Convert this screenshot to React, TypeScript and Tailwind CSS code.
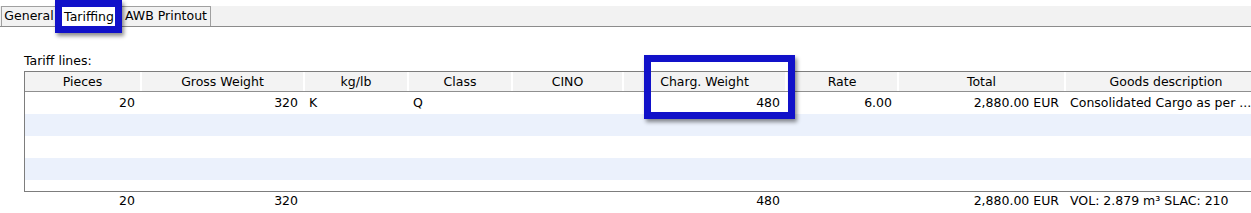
import React from "react";

type Col = { label: string; width: number };

const cols: Col[] = [
  { label: "Pieces", width: 116 },
  { label: "Gross Weight", width: 163 },
  { label: "kg/lb", width: 104 },
  { label: "Class", width: 104 },
  { label: "CINO", width: 111 },
  { label: "Charg. Weight", width: 163 },
  { label: "Rate", width: 112 },
  { label: "Total", width: 167 },
  { label: "Goods description", width: 202 },
];

// first data row: [text, align]
const firstRow: [string, "l" | "r"][] = [
  ["20", "r"],
  ["320", "r"],
  ["K", "l"],
  ["Q", "l"],
  ["", "l"],
  ["480", "r"],
  ["6.00", "r"],
  ["2,880.00 EUR", "r"],
  ["Consolidated Cargo as per ...", "l"],
];

const footer: [string, "l" | "r"][] = [
  ["20", "r"],
  ["320", "r"],
  ["", "l"],
  ["", "l"],
  ["", "l"],
  ["480", "r"],
  ["", "r"],
  ["2,880.00 EUR", "r"],
  ["VOL: 2.879 m\u00b3 SLAC: 210", "l"],
];

function Cell({ text, align, width }: { text: string; align: "l" | "r"; width: number }) {
  return (
    <div
      className={`shrink-0 h-full pt-px flex items-center whitespace-nowrap overflow-hidden border-r border-transparent ${
        align === "r" ? "justify-end pr-[5px]" : "justify-start pl-[5px]"
      }`}
      style={{ width }}
    >
      {text}
    </div>
  );
}

function Highlight({ className }: { className: string }) {
  return (
    <div
      className={`absolute border-[7px] border-[#1111c9] shadow-[2px_3px_4px_rgba(0,0,0,0.45)] pointer-events-none ${className}`}
    />
  );
}

export default function App() {
  return (
    <div className="relative w-[1251px] h-[213px] overflow-hidden bg-white text-[12.5px] text-black font-['DejaVu_Sans',sans-serif]">
      {/* tab strip */}
      <div className="mt-[6px] h-[21px] bg-[#f2f2f2] border-b border-[#8c8c8c] flex items-end pl-[1px]">
        <div className="h-[20px] w-[56px] border border-b-0 border-[#a0a0a0] flex items-center justify-center leading-none">
          General
        </div>
        <div className="h-[21px] w-[64px] -mb-px bg-white border border-b-0 border-[#a0a0a0] flex items-center justify-center leading-none">
          Tariffing
        </div>
        <div className="h-[20px] w-[90px] border border-b-0 border-[#a0a0a0] flex items-center justify-center leading-none">
          AWB Printout
        </div>
      </div>

      <div className="pl-[24px]">
        <div className="mt-[27px] h-[14px] leading-[14px]">Tariff lines:</div>

        {/* table */}
        <div className="mt-[3px] h-[121px] border border-r-0 border-[#7d7d7d] overflow-hidden flex flex-col">
          <div className="flex h-[20px] shrink-0 border-b border-[#8f8f8f] bg-[#f3f3f3]">
            {cols.map((c, i) => (
              <div
                key={c.label}
                className={`shrink-0 h-full pt-px flex items-center justify-center whitespace-nowrap border-l border-white border-r border-[#8f8f8f] ${
                  i === 0 ? "border-l-0" : ""
                }`}
                style={{ width: c.width }}
              >
                {c.label}
              </div>
            ))}
          </div>
          <div className="flex h-[22px] shrink-0 bg-white">
            {firstRow.map(([t, a], i) => (
              <Cell key={i} text={t} align={a} width={cols[i].width} />
            ))}
          </div>
          <div className="h-[22px] shrink-0 bg-[#ebf1fc]" />
          <div className="h-[22px] shrink-0 bg-white" />
          <div className="h-[22px] shrink-0 bg-[#ebf1fc]" />
          <div className="flex-1 bg-white" />
        </div>

        {/* totals */}
        <div className="flex h-[18px] pl-[1px]">
          {footer.map(([t, a], i) => (
            <Cell key={i} text={t} align={a} width={cols[i].width} />
          ))}
        </div>
      </div>

      <Highlight className="left-[55px] top-0 w-[67px] h-[33px]" />
      <Highlight className="left-[644px] top-[55px] w-[151px] h-[64px]" />
    </div>
  );
}
